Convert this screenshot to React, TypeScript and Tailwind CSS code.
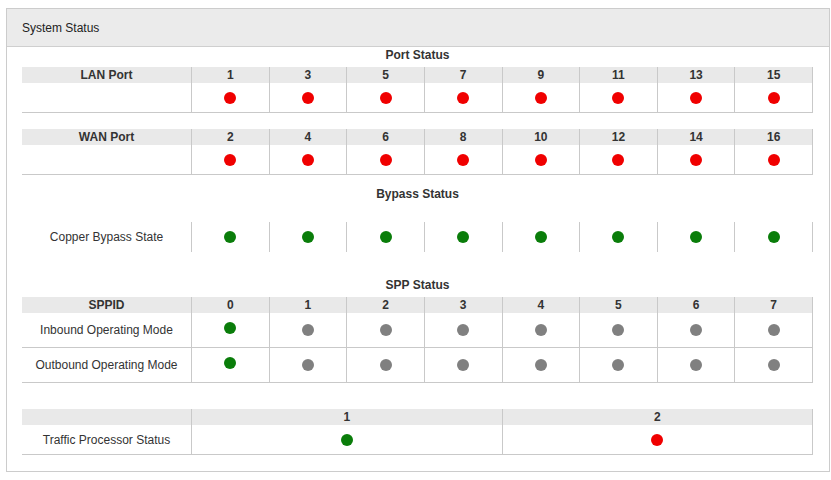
import React from 'react';

type Dot = 'red' | 'green' | 'gray';

const dotClass: Record<Dot, string> = {
  red: 'bg-[#f00000]',
  green: 'bg-[#0a7d0a]',
  gray: 'bg-[#808080]',
};

const lanPorts = ['1', '3', '5', '7', '9', '11', '13', '15'];
const wanPorts = ['2', '4', '6', '8', '10', '12', '14', '16'];
const sppIds = ['0', '1', '2', '3', '4', '5', '6', '7'];

function StatusDot({ color, lift = false }: { color: Dot; lift?: boolean }) {
  return <span className={`block w-3 h-3 rounded-full ${dotClass[color]} ${lift ? '-mt-[4px]' : ''}`} />;
}

function SectionTitle({ children, className = '' }: { children: React.ReactNode; className?: string }) {
  return <div className={`text-center font-bold text-[12px] leading-[14px] text-[#333] ${className}`}>{children}</div>;
}

// 8-column grid used by the port / bypass / spp tables
const grid8 = 'grid grid-cols-[170px_repeat(8,minmax(0,1fr))]';

function HeaderRow({ label, cells, cols = grid8 }: { label: string; cells: string[]; cols?: string }) {
  return (
    <div className={`${cols} h-[16px] bg-[#e9e9e9] text-[12px] leading-[16px] text-[#333]`}>
      <div className="border-r border-[#c9c9c9] text-center font-bold">{label}</div>
      {cells.map((c) => (
        <div key={c} className="border-r border-[#c9c9c9] text-center font-bold">{c}</div>
      ))}
    </div>
  );
}

function DotRow({
  label,
  dots,
  height = 'h-[30px]',
  bottom = true,
  lift = false,
  cols = grid8,
}: {
  label: string;
  dots: Dot[];
  height?: string;
  bottom?: boolean;
  lift?: boolean;
  cols?: string;
}) {
  return (
    <div className={`${cols} ${height} ${bottom ? 'border-b border-[#c9c9c9]' : ''} text-[12px] text-[#333]`}>
      <div className="border-r border-[#c9c9c9] flex items-center justify-center">{label}</div>
      {dots.map((d, i) => (
        <div key={i} className="border-r border-[#c9c9c9] flex items-center justify-center">
          <StatusDot color={d} lift={lift && d === 'green'} />
        </div>
      ))}
    </div>
  );
}

export default function App() {
  const red8: Dot[] = Array(8).fill('red');
  const green8: Dot[] = Array(8).fill('green');
  const spp: Dot[] = ['green', 'gray', 'gray', 'gray', 'gray', 'gray', 'gray', 'gray'];
  const grid2 = 'grid grid-cols-[170px_repeat(2,minmax(0,1fr))]';

  return (
    <div className="w-[831px] h-[480px] bg-white pt-[8px] pl-[6px] font-['Liberation_Sans',Arial,sans-serif]">
      <div className="w-[824px] h-[464px] border border-[#cccccc] bg-white">
        <div className="h-[38px] bg-[#ebebeb] border-b border-[#cfcfcf] flex items-center pl-[15px] text-[12px] text-[#222]">
          System Status
        </div>

        <div className="pl-[15px] pr-[16px]">
          {/* Port Status */}
          <SectionTitle className="h-[20px] pt-[1px]">Port Status</SectionTitle>
          <HeaderRow label="LAN Port" cells={lanPorts} />
          <DotRow label="" dots={red8} />
          <div className="h-[16px]" />
          <HeaderRow label="WAN Port" cells={wanPorts} />
          <DotRow label="" dots={red8} />

          {/* Bypass Status */}
          <SectionTitle className="mt-[12px] mb-[21px]">Bypass Status</SectionTitle>
          <DotRow label="Copper Bypass State" dots={green8} bottom={false} />

          {/* SPP Status */}
          <SectionTitle className="mt-[26px] mb-[5px]">SPP Status</SectionTitle>
          <HeaderRow label="SPPID" cells={sppIds} />
          <DotRow label="Inbound Operating Mode" dots={spp} height="h-[35px]" lift />
          <DotRow label="Outbound Operating Mode" dots={spp} height="h-[35px]" lift />

          {/* Traffic processors */}
          <div className="h-[26px]" />
          <HeaderRow label="" cells={['1', '2']} cols={grid2} />
          <DotRow label="Traffic Processor Status" dots={['green', 'red']} cols={grid2} />
        </div>
      </div>
    </div>
  );
}
